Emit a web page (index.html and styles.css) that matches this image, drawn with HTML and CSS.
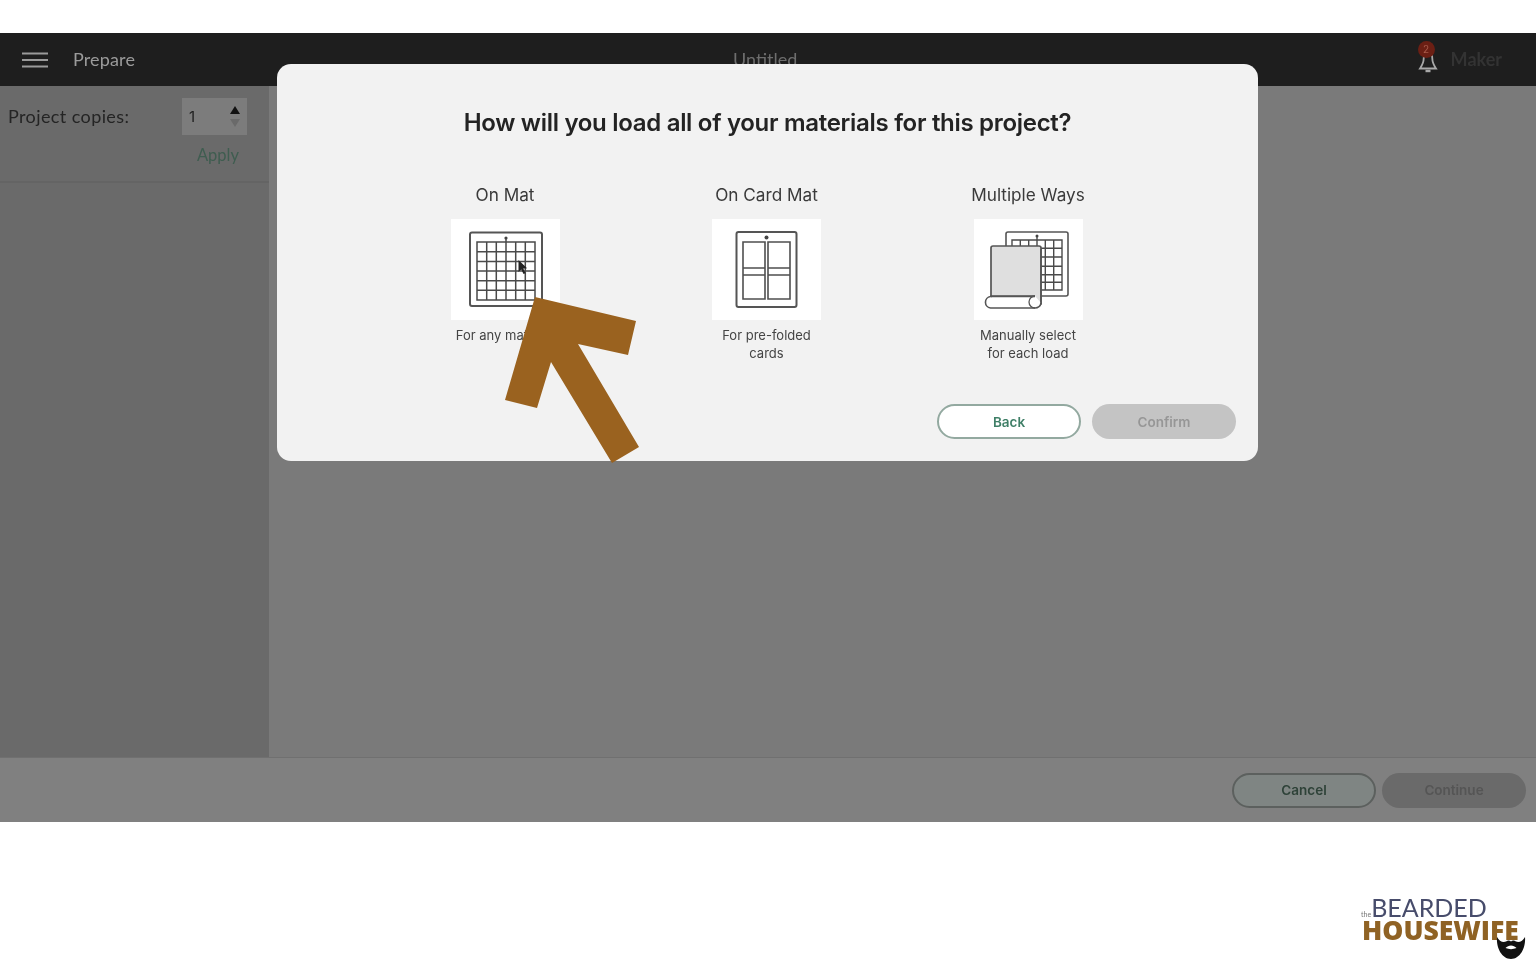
FILE: index.html
```html
<!DOCTYPE html>
<html lang="en">
<head>
<meta charset="utf-8">
<title>Prepare</title>
<link rel="stylesheet" href="styles.css">
</head>
<body>
<div class="top-gap"></div>
<div class="app">
  <header class="topbar">
    <div class="topbar-left">
      <svg class="menu-icon" width="26" height="16" viewBox="0 0 26 16"><path d="M0 1.500h26M0 8h26M0 14.500h26" stroke="#9a9a9a" stroke-width="2" fill="none"/></svg>
      <span class="prepare">Prepare</span>
    </div>
    <div class="doc-title">Untitled</div>
    <div class="topbar-right">
      <span class="bell-wrap">
        <svg class="bell" width="22" height="24" viewBox="0 0 22 24"><path d="M11 2.500c-3 0-4.300 2.500-4.300 6 0 4.500-1.700 7-3.700 10h16c-2-3-3.700-5.500-3.700-10 0-3.500-1.300-6-4.300-6z" fill="none" stroke="#a8a8a8" stroke-width="1.800"/><path d="M8.500 21h5" stroke="#a8a8a8" stroke-width="2.400"/></svg>
        <span class="badge">2</span>
      </span>
      <span class="maker">Maker</span>
    </div>
  </header>
  <div class="workspace">
    <aside class="sidebar">
      <div class="copies">
        <div class="copies-row">
          <span class="copies-label">Project copies:</span>
          <div class="stepper">
            <span class="stepper-value">1</span>
            <span class="stepper-arrows"><i class="arrow-up"></i><i class="arrow-down"></i></span>
          </div>
        </div>
        <div class="apply">Apply</div>
      </div>
    </aside>
    <main class="canvas"></main>
  </div>
  <footer class="footer">
    <button class="btn btn-outline-dim">Cancel</button>
    <button class="btn btn-filled-dim">Continue</button>
  </footer>

  <section class="modal">
    <h1 class="modal-title">How will you load all of your materials for this project?</h1>
    <div class="options">
      <div class="option">
        <h2 class="option-name">On Mat</h2>
        <div class="option-card">
          <svg class="option-art" width="109" height="101" viewBox="0 0 109 101">
            <rect x="19" y="13.500" width="72" height="73.500" rx="2" fill="none" stroke="#555" stroke-width="2"/>
            <path d="M26 23h58v58h-58zM26 32.700h58M26 42.400h58M26 52h58M26 61.700h58M26 71.300h58M35.700 23v58M45.300 23v58M55 18v63M64.700 23v58M74.300 23v58" fill="none" stroke="#4a4a4a" stroke-width="1.500"/>
            <circle cx="55" cy="19" r="1.600" fill="#444"/>
            <path d="M67.500 41l0 12 2.800-2.600 2.200 4.700 2-0.900-2.200-4.600 3.800-0.300z" fill="#222"/>
          </svg>
        </div>
        <p class="option-note">For any material</p>
      </div>
      <div class="option">
        <h2 class="option-name">On Card Mat</h2>
        <div class="option-card">
          <svg class="option-art" width="109" height="101" viewBox="0 0 109 101">
            <rect x="24.500" y="13" width="60" height="75" rx="2" fill="none" stroke="#555" stroke-width="2"/>
            <path d="M31 23h22v57h-22zM56 23h22v57h-22zM31 49h22M31 56h22M56 49h22M56 56h22" fill="none" stroke="#4f4f4f" stroke-width="1.600"/>
            <circle cx="54.500" cy="18.500" r="2" fill="#444"/>
          </svg>
        </div>
        <p class="option-note">For pre-folded<br>cards</p>
      </div>
      <div class="option">
        <h2 class="option-name">Multiple Ways</h2>
        <div class="option-card">
          <svg class="option-art" width="109" height="101" viewBox="0 0 109 101">
            <rect x="32" y="13" width="62" height="64" rx="2" fill="#fff" stroke="#555" stroke-width="1.600"/>
            <path d="M38 21h50v50h-50zM38 29.300h50M38 38h50M38 47.300h50M38 55.700h50M38 63.300h50M46.300 21v50M54.700 21v50M63 17v54M71.300 21v50M79.700 21v50" fill="none" stroke="#4a4a4a" stroke-width="1.400"/>
            <circle cx="63" cy="17" r="1.500" fill="#444"/>
            <path d="M17 29a2 2 0 0 1 2-2h46a2 2 0 0 1 2 2v56h-50z" fill="#dfdfdf" stroke="#555" stroke-width="1.700"/>
            <path d="M61 77h-44v0.500h-0.500a5.800 5.800 0 0 0 0 11.500h44.500a6 6 0 0 0 6-5" fill="#fff" stroke="#555" stroke-width="1.600"/>
            <path d="M61 77a6 6 0 0 0 0 12" fill="none" stroke="#555" stroke-width="1.300"/>
            <path d="M17 77.500h44M67 30v55" fill="none" stroke="#555" stroke-width="1.600"/>
          </svg>
        </div>
        <p class="option-note">Manually select<br>for each load</p>
      </div>
    </div>
    <div class="modal-actions">
      <button class="btn btn-outline">Back</button>
      <button class="btn btn-disabled">Confirm</button>
    </div>
  </section>
</div>

<svg class="big-arrow" width="140" height="170" viewBox="0 0 140 170">
  <polygon points="35,1 136,25 128,59 78,48 139,151 112,167 51,66 37,112 5,104" fill="#9a621f"/>
</svg>

<div class="bottom">
  <div class="logo">
    <div class="logo-line1"><span class="logo-the">the</span>BEARDED</div>
    <div class="logo-line2">HOUSEWIFE</div>
    <svg class="logo-beard" width="30" height="24" viewBox="0 0 30 24"><path d="M1 1c2 4 6 6 9 4.500 2-1.500 3.500-1.500 5 0 1.500-1.500 3-1.500 5 0 3 1.500 7-.5 9-4.500 1 11-5 22-14 22s-15-11-14-22z" fill="#111"/><path d="M9.500 12c3-3.500 8-3.500 11 0-3.500 1.500-7.500 1.500-11 0z" fill="#fff"/></svg>
  </div>
</div>
</body>
</html>
```
FILE: styles.css
```css
* { box-sizing: border-box; }
html, body { margin: 0; padding: 0; }
body {
  width: 1536px;
  height: 976px;
  position: relative;
  overflow: hidden;
  background: #fff;
  font-family: "Inter", "Liberation Sans", sans-serif;
}
.top-gap { height: 33px; }
.app {
  height: 789px;
  display: flex;
  flex-direction: column;
  filter: blur(0.6px);
  position: relative;
}
.topbar {
  height: 53px;
  background: #1e1e1e;
  display: flex;
  align-items: center;
  justify-content: space-between;
  padding: 0 34px 0 22px;
  position: relative;
}
.topbar-left { display: flex; align-items: center; gap: 25px; }
.menu-icon { display: block; }
.prepare { color: #9b9b9b; font-size: 18px; font-family: "Lato", sans-serif; letter-spacing: 0.15px; position: relative; top: -1px; }
.doc-title {
  position: absolute;
  left: 733px;
  top: 15px;
  color: #6e6e6e;
  font-size: 18px;
  font-family: "Lato", sans-serif;
}
.topbar-right { display: flex; align-items: center; gap: 12px; }
.bell-wrap { position: relative; display: block; width: 22px; height: 24px; margin-top: 4px; }
.bell { display: block; }
.badge {
  position: absolute;
  left: 1px;
  top: -9px;
  width: 17px;
  height: 17px;
  border-radius: 50%;
  background: #6b1f14;
  color: #a85a4a;
  font-size: 10px;
  line-height: 17px;
  text-align: center;
}
.maker { color: #333; font-size: 18px; font-weight: 700; font-family: "Lato", sans-serif; position: relative; top: -1px; }
.workspace { height: 671px; display: flex; }
.sidebar { width: 269px; background: #6a6a6a; }
.copies { height: 97px; border-bottom: 2px solid #646464; padding: 12px 22px 0 8px; }
.copies-row { display: flex; align-items: center; justify-content: space-between; }
.copies-label { font-size: 18px; line-height: 22px; color: #242424; font-family: "Lato", sans-serif; letter-spacing: 0.4px; position: relative; top: -1px; }
.stepper {
  width: 65px;
  height: 37px;
  background: #7c7c7c;
  display: flex;
  align-items: center;
  justify-content: space-between;
  padding: 0 7px;
}
.stepper-value { font-size: 15px; color: #202020; }
.stepper-arrows { display: flex; flex-direction: column; gap: 5px; }
.arrow-up, .arrow-down { display: block; width: 0; height: 0; border-left: 5px solid transparent; border-right: 5px solid transparent; }
.arrow-up { border-bottom: 8px solid #111; }
.arrow-down { border-top: 8px solid #6a6a6a; }
.apply { text-align: right; margin-top: 10px; padding-right: 8px; font-size: 16.500px; color: #3f5d50; font-family: "Lato", sans-serif; }
.canvas { flex: 1; background: #7a7a7a; }
.footer {
  height: 65px;
  background: #808080;
  border-top: 1px solid #707070;
  display: flex;
  align-items: center;
  justify-content: flex-end;
  gap: 6px;
  padding: 0 10px 0 0;
}
.btn {
  width: 144px;
  height: 35px;
  border-radius: 18px;
  font-family: "Inter", sans-serif;
  font-size: 13.500px;
  font-weight: 600;
  padding: 0;
}
.btn-outline-dim { background: #7f8583; border: 2px solid #5c605e; color: #2e4238; }
.btn-filled-dim { background: #6a6a6a; border: 0; color: #555; }
.btn-outline { background: #fff; border: 2px solid #93a9a0; color: #3f7f67; }
.btn-disabled { background: #c4c4c4; border: 0; color: #969696; }
.modal {
  position: absolute;
  left: 277px;
  top: 31px;
  width: 981px;
  height: 397px;
  background: #f2f2f2;
  border-radius: 14px;
  display: flex;
  flex-direction: column;
  align-items: center;
  padding-top: 42px;
}
.modal-title { margin: 0; font-size: 24px; line-height: 34px; font-weight: 600; color: #232323; letter-spacing: -0.3px; }
.options { display: flex; margin: 43px 2px 0 0; width: 643px; justify-content: space-between; }
.option { width: 120px; display: flex; flex-direction: column; align-items: center; }
.option-name { margin: 0; font-size: 17.200px; line-height: 24px; font-weight: 400; color: #3a3a3a; white-space: nowrap; }
.option-card {
  width: 109px;
  height: 101px;
  margin-top: 12px;
  background: #fff;
  display: flex;
}
.option-art { display: block; }
.option-note { margin: 7px 0 0; font-size: 13px; line-height: 17.500px; color: #444; text-align: center; white-space: nowrap; }
.modal-actions { position: absolute; right: 22px; bottom: 22px; display: flex; gap: 11px; }
.big-arrow { position: absolute; left: 500px; top: 296px; display: block; }
.bottom { height: 154px; display: flex; justify-content: flex-end; padding: 74px 10px 0 0; }
.logo { width: 164px; position: relative; filter: blur(0.5px); }
.logo-line1 { font-family: "Lato", sans-serif; font-size: 25px; line-height: 21px; padding-top: 1px; color: #474c6b; white-space: nowrap; margin-left: -1px; }
.logo-the { font-size: 7px; color: #777; }
.logo-line2 { font-family: "Open Sans", sans-serif; font-weight: 800; font-size: 26.500px; line-height: 10px; color: #8f6224; white-space: nowrap; }
.logo-beard { position: absolute; right: 0; top: 40px; display: block; }
```
